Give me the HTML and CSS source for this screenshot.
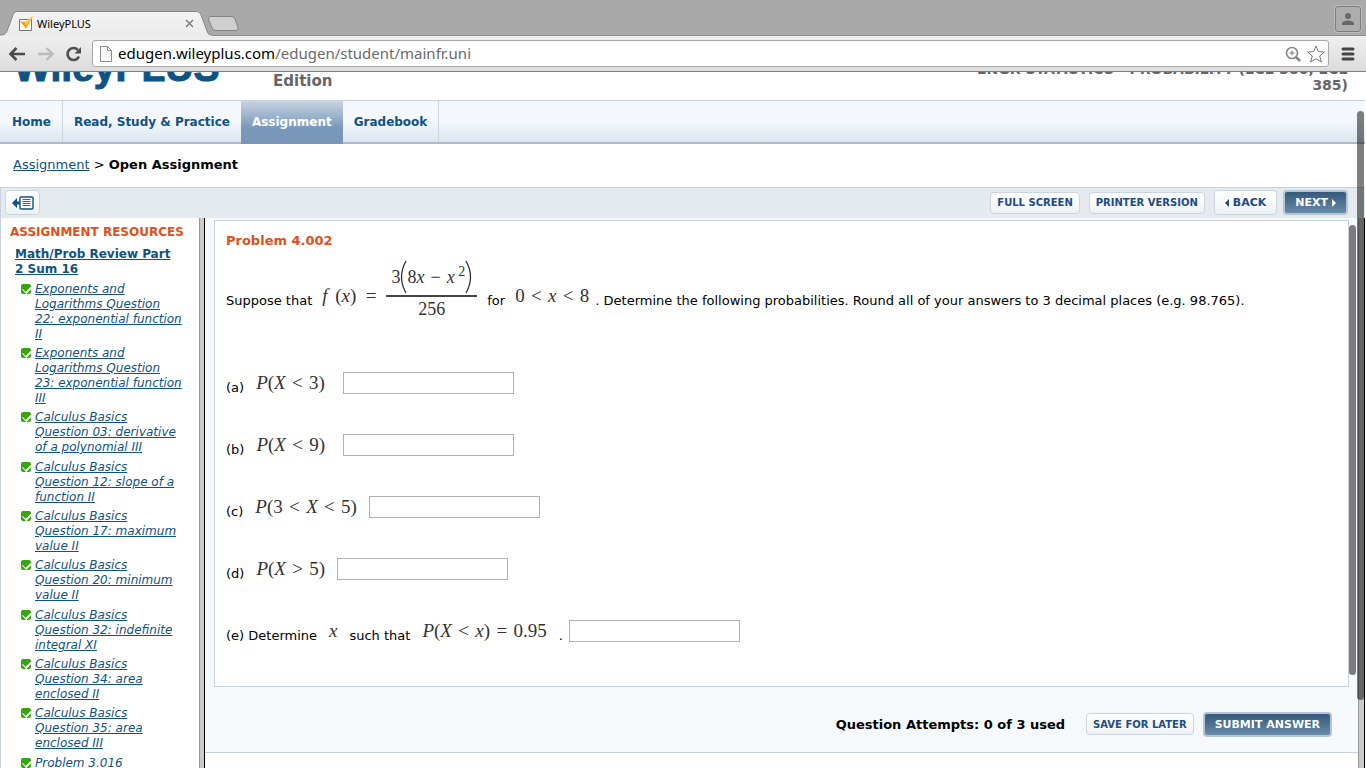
FILE: index.html
```html
<!DOCTYPE html>
<html lang="en">
<head>
  <meta charset="UTF-8">
  <meta name="viewport" content="width=device-width, initial-scale=1.0">
  <title>WileyPLUS</title>
  <link rel="stylesheet" href="styles.css">
</head>
<body>
  <!-- browser window -->
  <div class="tab-strip">
    <div class="tab">
      <svg class="tab-shape" viewBox="0 0 212 25" width="212" height="25">
        <defs>
          <linearGradient id="tabFill" x1="0" y1="0" x2="0" y2="1">
            <stop offset="0" stop-color="#f3f3f3"/>
            <stop offset="1" stop-color="#ebebeb"/>
          </linearGradient>
        </defs>
        <path d="M0 25V24C5 24 6 22 7 20L13 4C14 1.500 15 .5 18 .5H195C199 .5 200 2 201 4L207 20C208 23 209 24 212 24V25Z" fill="url(#tabFill)"/>
        <path d="M0 24C5 24 6 22 7 20L13 4C14 1.500 15 .5 18 .5H195C199 .5 200 2 201 4L207 20C208 23 209 24 212 24" fill="none" stroke="#858585"/>
      </svg>
      <svg class="favicon" viewBox="0 0 16 16" width="16" height="16">
        <path d="M1.500 3.500h12v11h-12z" fill="#fff" stroke="#777"/>
        <path d="M2 5L7 6L15 0L8 13Z" fill="#f9a31a"/>
        <path d="M7 6L15 0L8 9Z" fill="#ffd24a"/>
      </svg>
      <span class="tab-title">WileyPLUS</span>
      <svg class="tab-close" viewBox="0 0 9 9" width="9" height="9"><path d="M1 1l7 7M8 1L1 8" stroke="#777" stroke-width="1.400"/></svg>
    </div>
    <svg class="new-tab" viewBox="0 0 34 17" width="34" height="17"><path d="M4 1.500H24Q27 1.500 28 4L31 12Q32 15.500 29 15.500H9Q6 15.500 5 13L1.500 4Q1 1.500 4 1.500Z" fill="#cfcfcf" stroke="#838383"/></svg>
    <button class="user-btn" aria-label="User">
      <svg viewBox="0 0 14 14" width="14" height="14"><circle cx="7" cy="4" r="3" fill="#696969"/><path d="M1 13V11Q1 9 7 8.500Q13 9 13 11V13Z" fill="#696969"/></svg>
    </button>
  </div>
  <div class="address-row">
    <button class="chrome-btn" aria-label="Back"><svg viewBox="0 0 18 16" width="18" height="16"><path d="M8.500 2L2.500 8L8.500 14M3 8H17" fill="none" stroke="#4a4a4a" stroke-width="2.600"/></svg></button>
    <button class="chrome-btn" aria-label="Forward"><svg viewBox="0 0 18 16" width="18" height="16"><path d="M10.500 2L16.500 8L10.500 14M16 8H2" fill="none" stroke="#bbb" stroke-width="2.400"/></svg></button>
    <button class="chrome-btn" aria-label="Reload"><svg viewBox="0 0 18 16" width="18" height="16"><path d="M15 10.500A6 6 0 1 1 14 4" fill="none" stroke="#4f4f4f" stroke-width="2.600"/><path d="M17 1V7.500H10.500Z" fill="#4f4f4f"/></svg></button>
    <div class="address-box">
      <svg viewBox="0 0 12 16" width="12" height="16"><path d="M.5 .5H7.500L11.500 4.500V15.500H.5Z" fill="#f7f7f7" stroke="#8b8b8b"/><path d="M7.500 .5V4.500H11.500" fill="none" stroke="#8b8b8b"/></svg>
      <span class="url"><b>edugen.wileyplus.com</b>/edugen/student/mainfr.uni</span>
      <svg viewBox="0 0 16 16" width="16" height="16"><circle cx="7" cy="7" r="5.500" fill="none" stroke="#888" stroke-width="1.600"/><path d="M11 11L15 15" stroke="#888" stroke-width="2.600"/><path d="M7 4.500V9.500M4.500 7H9.500" stroke="#777"/></svg>
      <svg viewBox="0 0 18 18" width="18" height="18"><path d="M9 1L11.400 6.600L17.300 7L12.700 11L14.400 17L9 13.700L3.600 17L5.300 11L.7 7L6.600 6.600Z" fill="#fff" stroke="#777"/></svg>
    </div>
    <button class="chrome-btn" aria-label="Menu"><svg viewBox="0 0 14 14" width="14" height="14"><path d="M2 2H12M2 7H12M2 12H12" stroke="#444" stroke-width="3" stroke-linecap="round"/></svg></button>
  </div>

  <!-- page -->
  <div class="page">
    <header class="masthead">
      <div class="logo">WileyPLUS</div>
      <div class="edition">Edition</div>
      <div class="course">ENGR STATISTICS - PROBABILITY (ECE 380, ECE 385)</div>
    </header>
    <nav class="main-nav">
      <a href="#">Home</a>
      <a href="#">Read, Study &amp; Practice</a>
      <a href="#" class="active">Assignment</a>
      <a href="#">Gradebook</a>
    </nav>
    <div class="breadcrumb"><a href="#">Assignment</a> &gt; <b>Open Assignment</b></div>
    <div class="toolbar">
      <button class="btn btn-icon" aria-label="Hide resources">
        <svg viewBox="0 0 22 14" width="22" height="14"><path d="M0 7L5 2V5.500H8V8.500H5V12Z" fill="#0f5283"/><rect x="8" y="1" width="13" height="12" rx="1" fill="#fff" stroke="#0f5283" stroke-width="1.400"/><path d="M10.500 3.500h8M10.500 5.500h8M10.500 7.500h8M10.500 9.500h8" stroke="#2b6a96"/></svg>
      </button>
      <button class="btn first">FULL SCREEN</button>
      <button class="btn">PRINTER VERSION</button>
      <button class="btn btn-nav"><svg viewBox="0 0 4 8" width="4" height="8"><path d="M4 0V8L0 4Z" fill="#1c4b85"/></svg>BACK</button>
      <button class="btn btn-nav btn-primary next">NEXT<svg viewBox="0 0 4 8" width="4" height="8"><path d="M0 0V8L4 4Z" fill="#fff"/></svg></button>
    </div>

    <div class="content">
      <aside class="resources">
        <h2>ASSIGNMENT RESOURCES</h2>
        <a href="#" class="review">Math/Prob Review Part<br>2 Sum 16</a>
        <ul>
          <li><a href="#">Exponents and<br>Logarithms Question<br>22: exponential function<br>II</a></li>
          <li><a href="#">Exponents and<br>Logarithms Question<br>23: exponential function<br>III</a></li>
          <li><a href="#">Calculus Basics<br>Question 03: derivative<br>of a polynomial III</a></li>
          <li><a href="#">Calculus Basics<br>Question 12: slope of a<br>function II</a></li>
          <li><a href="#">Calculus Basics<br>Question 17: maximum<br>value II</a></li>
          <li><a href="#">Calculus Basics<br>Question 20: minimum<br>value II</a></li>
          <li><a href="#">Calculus Basics<br>Question 32: indefinite<br>integral XI</a></li>
          <li><a href="#">Calculus Basics<br>Question 34: area<br>enclosed II</a></li>
          <li><a href="#">Calculus Basics<br>Question 35: area<br>enclosed III</a></li>
          <li><a href="#">Problem 3.016</a></li>
        </ul>
      </aside>
      <main class="work">
        <div class="panel">
          <section class="problem">
            <h1>Problem 4.002</h1>
            <div class="statement">
              <span class="words">Suppose that</span>
              <span class="math"><i>f</i>&thinsp;&thinsp;(<i>x</i>)&ensp;=</span>
              <span class="fraction">
                <span class="top">3<svg viewBox="0 0 7 34" width="7" height="34"><path d="M6 1Q-3 17 6 33" fill="none" stroke="#333" stroke-width="1.300"/></svg><span>8<i>x</i>&emsp13;−&emsp13;<i>x</i>&thinsp;<sup>2</sup></span><svg viewBox="0 0 7 34" width="7" height="34"><path d="M1 1Q10 17 1 33" fill="none" stroke="#333" stroke-width="1.300"/></svg></span>
                <span class="bottom">256</span>
              </span>
              <span class="words">for</span>
              <span class="math">0&emsp13;&lt;&emsp13;<i>x</i>&emsp13;&lt;&emsp13;8</span>
              <span class="words after">. Determine the following probabilities. Round all of your answers to 3 decimal places (e.g. 98.765).</span>
            </div>
            <div class="part spaced">
              <label for="a">(a)</label>
              <span class="math"><i>P</i>(<i>X</i>&emsp13;&lt;&emsp13;3)</span>
              <input type="text" id="a">
            </div>
            <div class="part spaced">
              <label for="b">(b)</label>
              <span class="math"><i>P</i>(<i>X</i>&emsp13;&lt;&emsp13;9)</span>
              <input type="text" id="b">
            </div>
            <div class="part">
              <label for="c">(c)</label>
              <span class="math"><i>P</i>(3&emsp13;&lt;&emsp13;<i>X</i>&emsp13;&lt;&emsp13;5)</span>
              <input type="text" id="c">
            </div>
            <div class="part">
              <label for="d">(d)</label>
              <span class="math"><i>P</i>(<i>X</i>&emsp13;&gt;&emsp13;5)</span>
              <input type="text" id="d">
            </div>
            <div class="part">
              <label for="e">(e) Determine</label>
              <span class="math"><i>x</i></span>
              <span class="words">such that</span>
              <span class="math"><i>P</i>(<i>X</i>&emsp13;&lt;&emsp13;<i>x</i>)&emsp13;=&emsp13;0.95</span>
              <span class="words">.</span>
              <input type="text" id="e">
            </div>
          </section>
          <footer class="actions">
            <b>Question Attempts: 0 of 3 used</b>
            <button class="btn">SAVE FOR LATER</button>
            <button class="btn btn-nav btn-primary">SUBMIT ANSWER</button>
          </footer>
        </div>
        <div class="scroll-thumb inner-thumb"></div>
      </main>
      <div class="frame-edge"></div>
    </div>
    <div class="scroll-thumb page-thumb"></div>
  </div>
</body>
</html>
```
FILE: styles.css
```css
* {
  box-sizing: border-box;
}

body {
  margin: 0;
  height: 100vh;
  display: flex;
  flex-direction: column;
  overflow: hidden;
  font-family: Verdana, "DejaVu Sans", sans-serif;
  font-size: 13px;
  color: #000;
  background: #fff;
}

button {
  font-family: inherit;
  cursor: pointer;
}

svg {
  flex: none;
}

a {
  color: #0f5283;
}

/* browser window */
.tab-strip {
  height: 36px;
  flex: none;
  display: flex;
  align-items: flex-end;
  background: #a9a9a9;
  border-bottom: 1px solid #8e8e8e;
  font-family: "Noto Sans", sans-serif;
}

.tab {
  position: relative;
  width: 212px;
  height: 25px;
  margin-bottom: -1px;
  display: flex;
  align-items: center;
  padding: 0 18px;
}

.tab-shape {
  position: absolute;
  left: 0;
  top: 0;
}

.favicon,
.tab-title,
.tab-close {
  position: relative;
}

.tab-title {
  flex: 1;
  margin-left: 3px;
  font-size: 11px;
}

.new-tab {
  margin: 0 0 3px -5px;
}

.user-btn {
  width: 26px;
  height: 26px;
  padding: 0;
  margin: 0 5px 3px auto;
  display: flex;
  align-items: center;
  justify-content: center;
  background: #adadad;
  border: 1px solid #7d7d7d;
  border-radius: 3px;
  box-shadow: 0 0 0 1px #bcbcbc;
}

.address-row {
  height: 36px;
  flex: none;
  display: flex;
  align-items: center;
  padding: 0 9px 0 8px;
  gap: 10px;
  background: linear-gradient(#efefef, #dcdcdc);
  border-bottom: 1px solid #7f7f7f;
}

.chrome-btn {
  width: 18px;
  height: 16px;
  padding: 0;
  display: flex;
  align-items: center;
  justify-content: center;
  background: none;
  border: none;
}

.address-box {
  flex: 1;
  height: 27px;
  display: flex;
  align-items: center;
  gap: 6px;
  padding: 0 3px 0 7px;
  background: #fff;
  border: 1px solid #a8a8a8;
  border-radius: 3px;
}

.url {
  flex: 1;
  padding-bottom: 2px;
  line-height: 20px;
  font-family: "Noto Sans", sans-serif;
  font-size: 15px;
  color: #6a6a6a;
}

.url b {
  font-weight: normal;
  color: #000;
}

/* page */
.page {
  position: relative;
  flex: 1;
  min-height: 0;
  display: flex;
  flex-direction: column;
  padding-right: 1px;
}

.masthead {
  height: 28px;
  flex: none;
  display: flex;
  align-items: flex-end;
  overflow: hidden;
  padding: 0 17px 0 14px;
  font-weight: bold;
  color: #666;
}

.logo {
  width: 259px;
  font-family: "Liberation Sans", Arial, sans-serif;
  font-size: 39px;
  line-height: 40px;
  padding-bottom: 12px;
  color: #0f5283;
  -webkit-text-stroke: 1px #0f5283;
}

.edition {
  font-size: 15px;
  line-height: 18px;
  padding-bottom: 10px;
}

.course {
  width: 380px;
  margin-left: auto;
  text-align: right;
  font-size: 14px;
  line-height: 16px;
  padding-bottom: 7px;
}

.main-nav {
  height: 44px;
  flex: none;
  display: flex;
  background: linear-gradient(#f4f8fc 50%, #dce4ee);
  border-top: 1px solid #c8d1e0;
  border-bottom: 2px solid #adbacb;
}

.main-nav a {
  padding: 0 11px;
  line-height: 42px;
  font-size: 12px;
  font-weight: bold;
  text-decoration: none;
  border-right: 1px solid #cbd5e1;
}

.main-nav a:first-child {
  padding-left: 12px;
}

.main-nav .active {
  margin: -1px 0 -2px -1px;
  color: #fff;
  border: none;
  line-height: 44px;
  background: linear-gradient(#c9d6e3, #7897b9 65%);
}

.breadcrumb {
  height: 43px;
  flex: none;
  padding: 0 13px;
  line-height: 42px;
}

.toolbar {
  height: 31px;
  flex: none;
  display: flex;
  align-items: center;
  gap: 9px;
  padding: 0 17px 1px 4px;
  background: #e5eaef;
  border-top: 1px solid #c8d1e0;
  border-left: 1px solid #c8d1e0;
}

.btn {
  height: 22px;
  flex: none;
  display: flex;
  align-items: center;
  justify-content: center;
  padding: 0 6px;
  font-size: 10px;
  font-weight: bold;
  color: #1c4b85;
  background: linear-gradient(#fff, #eef1f4);
  border: 1px solid #cbd5e1;
  border-radius: 4px;
}

.btn.first {
  margin-left: auto;
}

.btn-icon {
  width: 35px;
  height: 25px;
  padding: 0;
}

.btn-nav {
  height: 25px;
  gap: 4px;
  padding: 0 10px;
  font-size: 11px;
}

.btn-primary {
  color: #fff;
  background: linear-gradient(#34597a, #6a8ba8);
  border: 2px solid #b4c5d7;
}

.next {
  margin-left: -3px;
}

.content {
  flex: 1;
  min-height: 0;
  display: flex;
}

.resources {
  width: 205px;
  flex: none;
  overflow: hidden;
  padding: 7px 5px 0 9px;
  white-space: nowrap;
  border-left: 1px solid #c8d1e0;
  border-right: 1px solid #000;
  background: linear-gradient(to left, #cacaca 4px, #999 4px, #999 5px, #fff 5px);
}

.resources h2 {
  margin: 0;
  font-size: 12px;
  line-height: 15px;
  color: #e24f1a;
}

.review {
  display: block;
  margin: 7px 0 5px 5px;
  font-size: 12px;
  font-weight: bold;
  line-height: 15px;
}

.resources ul {
  list-style: none;
  margin: 0;
  padding: 0;
}

.resources li {
  position: relative;
  padding-left: 25px;
  margin-bottom: 4px;
  font-size: 12px;
  font-style: italic;
  line-height: 15px;
}

.resources li:nth-child(3n) {
  margin-bottom: 5px;
}

/* green tick box */
.resources li::before {
  content: "";
  position: absolute;
  left: 11px;
  top: 2px;
  width: 10px;
  height: 10px;
  border-radius: 2px;
  background: #35a512;
}

.resources li::after {
  content: "";
  position: absolute;
  left: 13px;
  top: 4px;
  width: 7px;
  height: 4px;
  border-left: 1px solid #fff;
  border-bottom: 2px solid #fff;
  transform: rotate(-45deg);
}

.work {
  position: relative;
  flex: 1;
  min-width: 0;
}

.panel {
  padding: 2px 9px 0;
  background: #f5f9fc;
  border-bottom: 1px solid #c8d1e0;
}

.problem {
  min-height: 467px;
  padding: 12px 11px 0;
  background: #fff;
  border: 1px solid #c8d1e0;
}

.problem h1 {
  margin: 0 0 12px;
  font-size: 13px;
  line-height: 16px;
  color: #e24f1a;
}

.statement {
  display: flex;
  align-items: center;
  gap: 10px;
  margin-bottom: 41px;
  white-space: nowrap;
}

/* plain text sits a little lower than the formulas */
.words,
.part label {
  padding-top: 8px;
}

.words.after {
  margin-left: -4px;
}

.math,
.fraction {
  font-family: "Liberation Serif", "Times New Roman", serif;
  font-size: 19px;
  color: #333;
}

.fraction {
  display: flex;
  flex-direction: column;
  text-align: center;
  font-size: 18px;
}

.top {
  display: flex;
  align-items: center;
  height: 36px;
  padding: 0 5px 2px;
  border-bottom: 2px solid #444;
}

.top sup {
  font-size: 14px;
  line-height: 0;
}

.bottom {
  height: 34px;
  line-height: 24px;
}

.part {
  display: flex;
  align-items: center;
  gap: 12px;
  height: 22px;
  margin-bottom: 40px;
}

.part input {
  width: 171px;
  height: 22px;
  padding: 0 3px;
  border: 1px solid #b0b0b0;
}

.part .words + input {
  margin-left: -6px;
}

.spaced input {
  margin-left: 6px;
}

.actions {
  display: flex;
  align-items: center;
  justify-content: flex-end;
  gap: 9px;
  height: 65px;
  padding: 9px 17px 0 0;
}

.actions b {
  margin-right: 12px;
}

.scroll-thumb {
  position: absolute;
  width: 7px;
  border-radius: 4px;
  background: #7c7c7c;
}

.inner-thumb {
  top: 7px;
  right: 2px;
  height: 450px;
}

.page-thumb {
  top: 39px;
  right: 2px;
  height: 589px;
  background: rgba(0, 0, 0, 0.5);
}

.frame-edge {
  width: 7px;
  flex: none;
  background: #cacaca;
  border-left: 1px solid #999;
  border-right: 1px solid #000;
}
```
